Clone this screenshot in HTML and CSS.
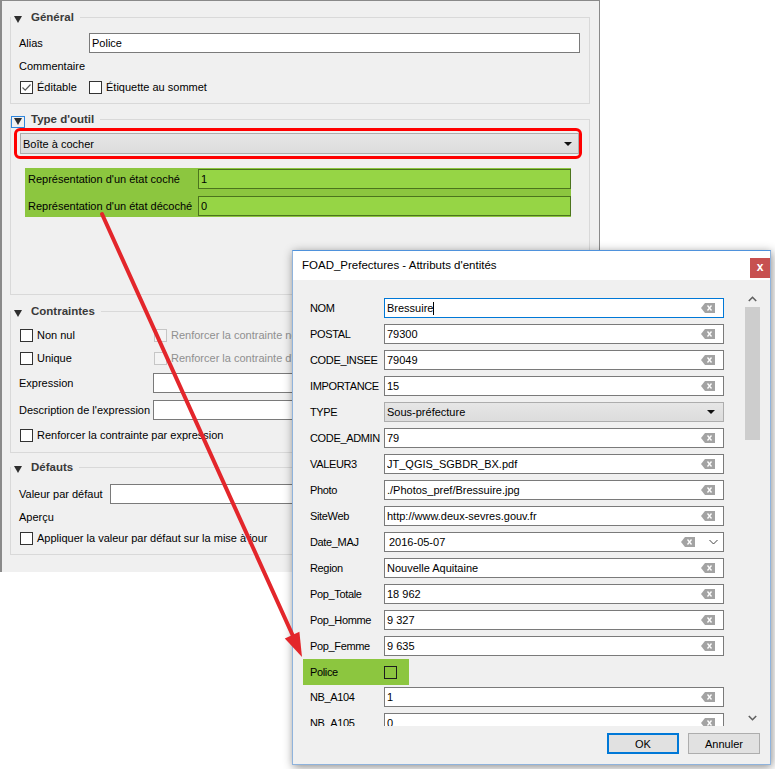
FILE: index.html
```html
<!DOCTYPE html>
<html lang="fr">
<head>
<meta charset="utf-8">
<title>QGIS</title>
<link rel="stylesheet" href="styles.css">
</head>
<body>
<div class="panel">
  <fieldset class="grp g1">
    <legend><span class="tri"></span>Général</legend>
    <div class="row pad mt7"><span class="lbl" style="width:70px">Alias</span><span class="input grow">Police</span></div>
    <div class="row pad mt3"><span class="lbl">Commentaire</span></div>
    <div class="row pad mt1">
      <span class="cbitem" style="width:69px"><span class="cb"><svg width="11" height="11" viewBox="0 0 11 11"><path d="M1.5 5.5 L4.2 8.2 L9.5 2.5" fill="none" stroke="#5a5a5a" stroke-width="1.2"/></svg></span><span>Éditable</span></span>
      <span class="cbitem"><span class="cb"></span><span>Étiquette au sommet</span></span>
    </div>
  </fieldset>

  <fieldset class="grp g2">
    <legend><span class="tri focus"></span>Type d'outil</legend>
    <div class="redbox">
      <div class="combo"><span class="grow">Boîte à cocher</span><span class="dd"></span></div>
    </div>
    <div class="green">
      <div class="grow-row"><span class="glbl">Représentation d'un état coché</span><span class="ginput">1</span></div>
      <div class="grow-row mt7"><span class="glbl">Représentation d'un état décoché</span><span class="ginput">0</span></div>
    </div>
  </fieldset>

  <fieldset class="grp g3">
    <legend><span class="tri"></span>Contraintes</legend>
    <div class="row pad mt5">
      <span class="cbitem" style="width:134px"><span class="cb"></span><span>Non nul</span></span>
      <span class="cbitem dis"><span class="cb"></span><span>Renforcer la contrainte non nul</span></span>
    </div>
    <div class="row pad mt3">
      <span class="cbitem" style="width:134px"><span class="cb"></span><span>Unique</span></span>
      <span class="cbitem dis"><span class="cb"></span><span>Renforcer la contrainte d'unicité</span></span>
    </div>
    <div class="row pad mt5"><span class="lbl" style="width:134px">Expression</span><span class="input grow"></span></div>
    <div class="row pad mt7"><span class="lbl" style="width:134px">Description de l'expression</span><span class="input grow"></span></div>
    <div class="row pad mt5">
      <span class="cbitem"><span class="cb"></span><span>Renforcer la contrainte par expression</span></span>
    </div>
  </fieldset>

  <fieldset class="grp g4">
    <legend><span class="tri"></span>Défauts</legend>
    <div class="row pad mt8"><span class="lbl" style="width:91px">Valeur par défaut</span><span class="input grow"></span></div>
    <div class="row pad mt3"><span class="lbl">Aperçu</span></div>
    <div class="row pad mt1">
      <span class="cbitem"><span class="cb"></span><span>Appliquer la valeur par défaut sur la mise à jour</span></span>
    </div>
  </fieldset>
</div>

<div class="dialog">
  <div class="titlebar">
    <span class="title">FOAD_Prefectures - Attributs d'entités</span>
    <span class="close">x</span>
  </div>
  <div class="dbody">
    <div class="scrollrow">
      <div class="scrollcontent">
        <div class="drow first"><span class="dlbl">NOM</span><span class="dinput focus"><span>Bressuire</span><span class="caret"></span><span class="grow"></span><svg class="clr" width="14" height="10" viewBox="0 0 14 10"><path d="M0 5 L4 0 H14 V10 H4 Z" fill="#a3a3a3"/><path d="M6.5 2.5 L10.5 7.5 M10.5 2.5 L6.5 7.5" stroke="#fff" stroke-width="1.3"/></svg></span></div>
        <div class="drow"><span class="dlbl">POSTAL</span><span class="dinput"><span class="grow">79300</span><svg class="clr" width="14" height="10" viewBox="0 0 14 10"><path d="M0 5 L4 0 H14 V10 H4 Z" fill="#a3a3a3"/><path d="M6.5 2.5 L10.5 7.5 M10.5 2.5 L6.5 7.5" stroke="#fff" stroke-width="1.3"/></svg></span></div>
        <div class="drow"><span class="dlbl">CODE_INSEE</span><span class="dinput"><span class="grow">79049</span><svg class="clr" width="14" height="10" viewBox="0 0 14 10"><path d="M0 5 L4 0 H14 V10 H4 Z" fill="#a3a3a3"/><path d="M6.5 2.5 L10.5 7.5 M10.5 2.5 L6.5 7.5" stroke="#fff" stroke-width="1.3"/></svg></span></div>
        <div class="drow"><span class="dlbl">IMPORTANCE</span><span class="dinput"><span class="grow">15</span><svg class="clr" width="14" height="10" viewBox="0 0 14 10"><path d="M0 5 L4 0 H14 V10 H4 Z" fill="#a3a3a3"/><path d="M6.5 2.5 L10.5 7.5 M10.5 2.5 L6.5 7.5" stroke="#fff" stroke-width="1.3"/></svg></span></div>
        <div class="drow"><span class="dlbl">TYPE</span><span class="dinput combo2"><span class="grow">Sous-préfecture</span><span class="dd"></span></span></div>
        <div class="drow"><span class="dlbl">CODE_ADMIN</span><span class="dinput"><span class="grow">79</span><svg class="clr" width="14" height="10" viewBox="0 0 14 10"><path d="M0 5 L4 0 H14 V10 H4 Z" fill="#a3a3a3"/><path d="M6.5 2.5 L10.5 7.5 M10.5 2.5 L6.5 7.5" stroke="#fff" stroke-width="1.3"/></svg></span></div>
        <div class="drow"><span class="dlbl">VALEUR3</span><span class="dinput"><span class="grow">JT_QGIS_SGBDR_BX.pdf</span><svg class="clr" width="14" height="10" viewBox="0 0 14 10"><path d="M0 5 L4 0 H14 V10 H4 Z" fill="#a3a3a3"/><path d="M6.5 2.5 L10.5 7.5 M10.5 2.5 L6.5 7.5" stroke="#fff" stroke-width="1.3"/></svg></span></div>
        <div class="drow"><span class="dlbl">Photo</span><span class="dinput"><span class="grow">./Photos_pref/Bressuire.jpg</span><svg class="clr" width="14" height="10" viewBox="0 0 14 10"><path d="M0 5 L4 0 H14 V10 H4 Z" fill="#a3a3a3"/><path d="M6.5 2.5 L10.5 7.5 M10.5 2.5 L6.5 7.5" stroke="#fff" stroke-width="1.3"/></svg></span></div>
        <div class="drow"><span class="dlbl">SiteWeb</span><span class="dinput"><span class="grow">http://www.deux-sevres.gouv.fr</span><svg class="clr" width="14" height="10" viewBox="0 0 14 10"><path d="M0 5 L4 0 H14 V10 H4 Z" fill="#a3a3a3"/><path d="M6.5 2.5 L10.5 7.5 M10.5 2.5 L6.5 7.5" stroke="#fff" stroke-width="1.3"/></svg></span></div>
        <div class="drow"><span class="dlbl">Date_MAJ</span><span class="dinput date"><span class="grow">2016-05-07</span><svg class="clr" width="14" height="10" viewBox="0 0 14 10"><path d="M0 5 L4 0 H14 V10 H4 Z" fill="#a3a3a3"/><path d="M6.5 2.5 L10.5 7.5 M10.5 2.5 L6.5 7.5" stroke="#fff" stroke-width="1.3"/></svg><svg class="chev" width="9" height="6" viewBox="0 0 9 6"><path d="M0.5 1 L4.5 5 L8.5 1" fill="none" stroke="#444" stroke-width="1"/></svg></span></div>
        <div class="drow"><span class="dlbl">Region</span><span class="dinput"><span class="grow">Nouvelle Aquitaine</span><svg class="clr" width="14" height="10" viewBox="0 0 14 10"><path d="M0 5 L4 0 H14 V10 H4 Z" fill="#a3a3a3"/><path d="M6.5 2.5 L10.5 7.5 M10.5 2.5 L6.5 7.5" stroke="#fff" stroke-width="1.3"/></svg></span></div>
        <div class="drow"><span class="dlbl">Pop_Totale</span><span class="dinput"><span class="grow">18 962</span><svg class="clr" width="14" height="10" viewBox="0 0 14 10"><path d="M0 5 L4 0 H14 V10 H4 Z" fill="#a3a3a3"/><path d="M6.5 2.5 L10.5 7.5 M10.5 2.5 L6.5 7.5" stroke="#fff" stroke-width="1.3"/></svg></span></div>
        <div class="drow"><span class="dlbl">Pop_Homme</span><span class="dinput"><span class="grow">9 327</span><svg class="clr" width="14" height="10" viewBox="0 0 14 10"><path d="M0 5 L4 0 H14 V10 H4 Z" fill="#a3a3a3"/><path d="M6.5 2.5 L10.5 7.5 M10.5 2.5 L6.5 7.5" stroke="#fff" stroke-width="1.3"/></svg></span></div>
        <div class="drow"><span class="dlbl">Pop_Femme</span><span class="dinput"><span class="grow">9 635</span><svg class="clr" width="14" height="10" viewBox="0 0 14 10"><path d="M0 5 L4 0 H14 V10 H4 Z" fill="#a3a3a3"/><path d="M6.5 2.5 L10.5 7.5 M10.5 2.5 L6.5 7.5" stroke="#fff" stroke-width="1.3"/></svg></span></div>
        <div class="drow police"><span class="dlbl">Police</span><span class="cb pcb"></span></div>
        <div class="drow after-police"><span class="dlbl">NB_A104</span><span class="dinput"><span class="grow">1</span><svg class="clr" width="14" height="10" viewBox="0 0 14 10"><path d="M0 5 L4 0 H14 V10 H4 Z" fill="#a3a3a3"/><path d="M6.5 2.5 L10.5 7.5 M10.5 2.5 L6.5 7.5" stroke="#fff" stroke-width="1.3"/></svg></span></div>
        <div class="drow"><span class="dlbl">NB_A105</span><span class="dinput"><span class="grow">0</span><svg class="clr" width="14" height="10" viewBox="0 0 14 10"><path d="M0 5 L4 0 H14 V10 H4 Z" fill="#a3a3a3"/><path d="M6.5 2.5 L10.5 7.5 M10.5 2.5 L6.5 7.5" stroke="#fff" stroke-width="1.3"/></svg></span></div>
      </div>
      <div class="scrollbar">
        <div class="sbbtn"><svg width="9" height="6" viewBox="0 0 9 6"><path d="M0.8 5 L4.5 1.3 L8.2 5" fill="none" stroke="#606060" stroke-width="1.6"/></svg></div>
        <div class="thumb"></div>
        <div class="sbspace"></div>
        <div class="sbbtn"><svg width="9" height="6" viewBox="0 0 9 6"><path d="M0.8 1 L4.5 4.7 L8.2 1" fill="none" stroke="#606060" stroke-width="1.6"/></svg></div>
      </div>
    </div>
    <div class="btnrow">
      <span class="btn default">OK</span>
      <span class="btn">Annuler</span>
    </div>
  </div>
</div>

<svg class="arrow" width="775" height="769" viewBox="0 0 775 769">
  <line x1="102" y1="214" x2="293" y2="636" stroke="#e3262b" stroke-width="4" stroke-linecap="round"/>
  <polygon points="302,657 284.8,638.4 299.4,631.8" fill="#e3262b"/>
</svg>
</body>
</html>
```

FILE: styles.css
```css
* { box-sizing: border-box; }
html, body { margin: 0; padding: 0; }
body {
  width: 775px;
  height: 769px;
  background: #fff;
  position: relative;
  overflow: hidden;
  font-family: "Liberation Sans", Arial, sans-serif;
  font-size: 11px;
  color: #000;
}

.grow { flex: 1; min-width: 0; white-space: nowrap; overflow: hidden; }
.mt1 { margin-top: 1px; }
.mt3 { margin-top: 3px; }
.mt5 { margin-top: 5px; }
.mt7 { margin-top: 7px; }
.mt8 { margin-top: 8px; }

/* ---------- left properties panel ---------- */
.panel {
  width: 600px;
  height: 572px;
  background: #f0f0f0;
  border: 1px solid #8a8a8a;
  border-bottom: none;
  border-left: 2px solid #8a8a8a;
  padding-top: 7px;
}
.grp {
  margin: 0 0 0 8px;
  width: 580px;
  border: 1px solid #d9d9d9;
  padding: 0;
  min-width: 0;
}
.g1 { padding-bottom: 6px; }
.g2 { margin-top: 6px; padding-bottom: 77px; }
.g3 { margin-top: 7px; padding-bottom: 7px; }
.g4 { margin-top: 5px; padding-bottom: 6px; }

.grp legend {
  padding: 0 6px 0 0;
  height: 18px;
  line-height: 18px;
  font-weight: bold;
  font-size: 11.5px;
  color: #3a3a3a;
  white-space: nowrap;
}
.tri {
  display: inline-flex;
  align-items: center;
  justify-content: center;
  width: 14px;
  height: 12px;
  border: 1px solid transparent;
  vertical-align: -2px;
  margin-right: 6px;
}
.tri::before {
  content: "";
  border-left: 4.5px solid transparent;
  border-right: 4.5px solid transparent;
  border-top: 7px solid #2e2e2e;
}
.tri.focus { border-color: #2f86de; }

.row {
  display: flex;
  align-items: center;
  height: 20px;
  white-space: nowrap;
}
.pad { padding: 0 9px 0 8px; }
.lbl { flex: none; }
.input {
  height: 20px;
  background: #fff;
  border: 1px solid #7a7a7a;
  padding: 0 2px;
  display: flex;
  align-items: center;
}
.cbitem {
  display: flex;
  align-items: center;
  gap: 4px;
  flex: none;
  margin-left: 1px;
}
.cbitem + .cbitem { margin-left: 0; }
.cb {
  width: 13px;
  height: 13px;
  border: 1px solid #333;
  background: #fff;
  flex: none;
  display: flex;
  align-items: center;
  justify-content: center;
}
.cbitem.dis { color: #8f8f8f; }
.cbitem.dis .cb { border-color: #c6c6c6; background: #f4f4f4; }

.redbox {
  margin: 0 0 0 3px;
  width: 568px;
  height: 31px;
  border: 3px solid #ff0000;
  border-radius: 6px;
  padding: 2px 0 1px 3px;
}
.combo {
  height: 21px;
  background: linear-gradient(#e6e6e6, #dcdcdc);
  border: 1px solid #adadad;
  display: flex;
  align-items: center;
  padding: 0 6px 0 2px;
}
.dd {
  flex: none;
  width: 0;
  height: 0;
  border-left: 4px solid transparent;
  border-right: 4px solid transparent;
  border-top: 4px solid #111;
}

.green {
  margin: 9px 0 0 14px;
  width: 546px;
  background: #8cc63f;
  padding: 1px 0 1px 3px;
}
.grow-row {
  display: flex;
  align-items: center;
  height: 20px;
  white-space: nowrap;
}
.glbl { width: 170px; flex: none; }
.ginput {
  flex: 1;
  height: 20px;
  background: #96d545;
  border: 1px solid #4c741d;
  padding: 0 2px;
  display: flex;
  align-items: center;
}

/* ---------- dialog ---------- */
.dialog {
  position: absolute;
  left: 292px;
  top: 250px;
  width: 479px;
  height: 515px;
  border: 1px solid #8fb3dc;
  border-top-color: #4f92dc;
  background: #f0f0f0;
  box-shadow: 1px 2px 9px rgba(0, 0, 0, 0.45);
  display: flex;
  flex-direction: column;
}
.titlebar {
  height: 29px;
  flex: none;
  background: #fff;
  display: flex;
  align-items: flex-start;
  padding-left: 9px;
}
.title {
  margin-top: 8px;
  font-size: 11.5px;
  white-space: nowrap;
}
.close {
  margin-left: auto;
  margin-top: 7px;
  width: 20px;
  height: 20px;
  background: #c75050;
  color: #fff;
  font-weight: bold;
  font-size: 12px;
  display: flex;
  align-items: center;
  justify-content: center;
  line-height: 1;
  padding-bottom: 2px;
}
.dbody {
  flex: 1;
  display: flex;
  flex-direction: column;
  padding-top: 10px;
}
.scrollrow {
  display: flex;
  height: 436px;
  flex: none;
}
.scrollcontent {
  width: 451px;
  overflow: hidden;
  padding-top: 8px;
}
.drow {
  display: flex;
  align-items: center;
  height: 20px;
  margin: 6px 0 0 10px;
  white-space: nowrap;
}
.drow.first { margin-top: 0; }
.drow.police {
  margin-top: 3px;
  height: 26px;
  width: 106px;
  background: #8cc63f;
}
.drow.after-police { margin-top: 2px; }
.dlbl { width: 81px; padding-left: 7px; flex: none; letter-spacing: -0.35px; }
.dinput {
  width: 340px;
  height: 20px;
  flex: none;
  background: #fff;
  border: 1px solid #7a7a7a;
  padding: 0 8px 0 2px;
  display: flex;
  align-items: center;
}
.dinput.focus { border-color: #0078d7; }
.dinput.combo2 {
  background: linear-gradient(#e6e6e6, #dcdcdc);
  border-color: #adadad;
}
.dinput.date { padding-left: 4px; padding-right: 5px; }
.caret { width: 1px; height: 13px; background: #000; flex: none; }
.clr { flex: none; }
.chev { flex: none; margin-left: 14px; }
.pcb { background: transparent; border-color: #1d1d1d; }

.scrollbar {
  width: 17px;
  display: flex;
  flex-direction: column;
  background: #f0f0f0;
}
.sbbtn {
  height: 17px;
  display: flex;
  align-items: center;
  justify-content: center;
  flex: none;
}
.thumb {
  height: 133px;
  margin: 0 1px;
  background: #cdcdcd;
  flex: none;
}
.sbspace { flex: 1; }

.btnrow {
  display: flex;
  justify-content: flex-end;
  gap: 9px;
  margin-top: 7px;
  padding-right: 10px;
}
.btn {
  width: 72px;
  height: 21px;
  background: #e1e1e1;
  border: 1px solid #adadad;
  display: flex;
  align-items: center;
  justify-content: center;
}
.btn.default { border: 2px solid #0078d7; }

.arrow {
  position: absolute;
  left: 0;
  top: 0;
  pointer-events: none;
}
```
